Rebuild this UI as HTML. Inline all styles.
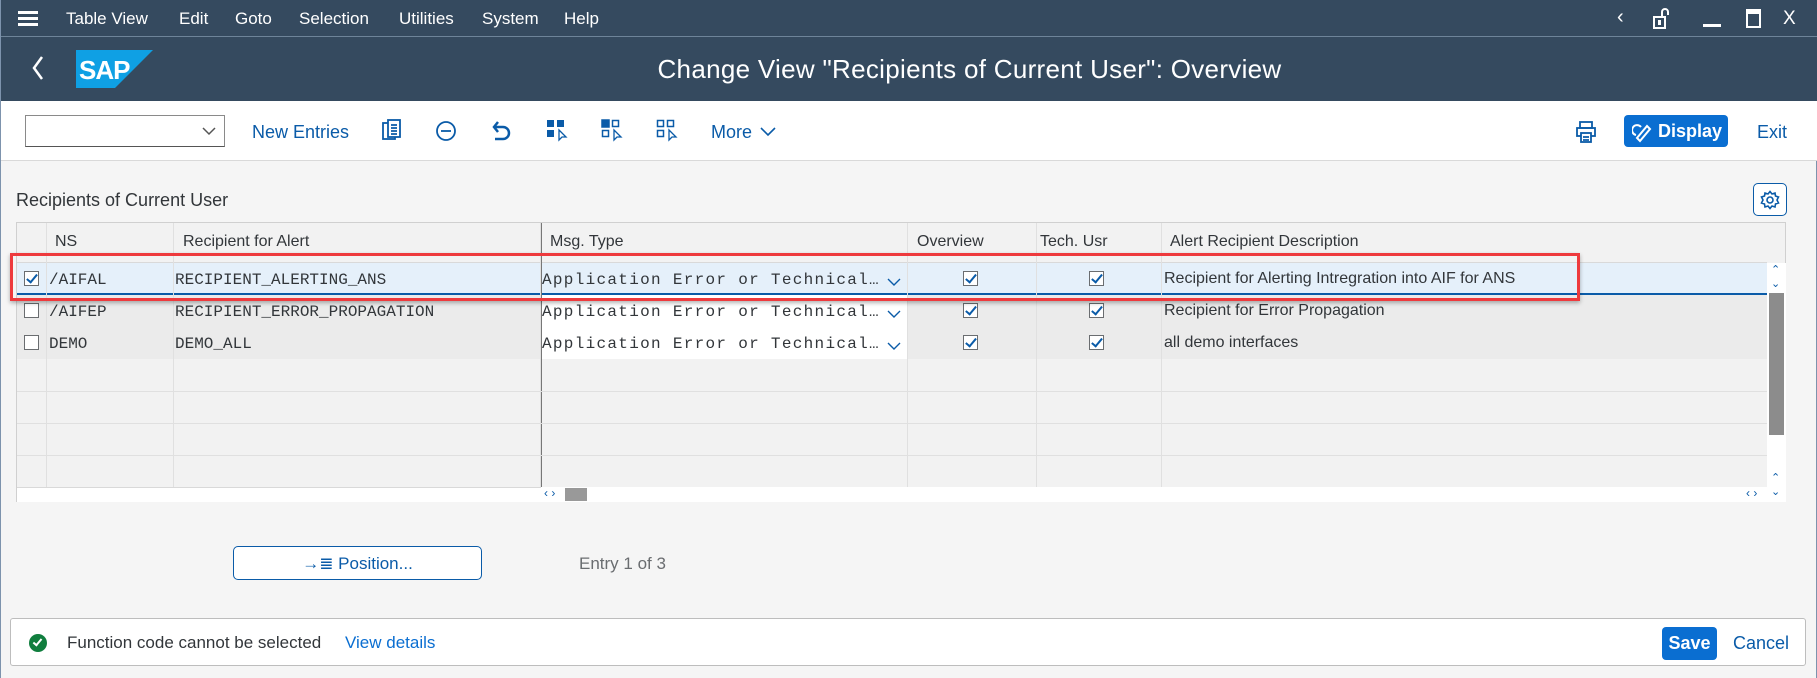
<!DOCTYPE html>
<html><head><meta charset="utf-8"><style>
*{box-sizing:border-box;margin:0;padding:0}
body{width:1817px;height:678px;overflow:hidden;background:#f5f5f5;font-family:"Liberation Sans",sans-serif;position:relative;border-left:1px solid #7d93ad;border-right:1px solid #7d93ad}
.a{position:absolute}
.menu{left:0;top:0;width:1817px;height:37px;background:#354a5f;border-bottom:1px solid #6e8499}
.menu span{position:absolute;top:9px;color:#fff;font-size:17px}
.title{left:0;top:37px;width:1817px;height:64px;background:#354a5f}
.tb{left:0;top:101px;width:1817px;height:60px;background:#fff;border-bottom:1px solid #d9d9d9}
.blue{color:#0a5ba8}
.mono{font-family:"Liberation Mono",monospace;font-size:16px;color:#32363a}
.cell{position:absolute;top:0;height:100%;border-right:1px solid #e0e0e0}
.cb{position:absolute;width:15px;height:15px;border:1px solid #6a6d70;background:#fff}
.cb.on::after{content:"";position:absolute;left:4px;top:0px;width:4px;height:9px;border:solid #0a5ba8;border-width:0 2px 2px 0;transform:rotate(40deg)}
</style></head><body>
<div class="a menu">
 <div class="a" style="left:17px;top:11px;width:20px;height:3px;background:#fff;box-shadow:0 6px 0 #fff,0 12px 0 #fff"></div>
 <span style="left:65px">Table View</span><span style="left:178px">Edit</span><span style="left:234px">Goto</span><span style="left:298px">Selection</span><span style="left:398px">Utilities</span><span style="left:481px">System</span><span style="left:563px">Help</span>
 <span style="left:1616px;top:6px;font-size:20px">‹</span>
 <svg class="a" style="left:1651px;top:8px" width="20" height="22"><rect x="2" y="9" width="11" height="11" fill="none" stroke="#fff" stroke-width="2"/><path d="M10 9V4a3 3 0 0 1 6 0v3" fill="none" stroke="#fff" stroke-width="2"/><rect x="6" y="12" width="3" height="5" fill="#fff"/></svg>
 <div class="a" style="left:1702px;top:24px;width:18px;height:3px;background:#fff"></div>
 <div class="a" style="left:1745px;top:9px;width:15px;height:19px;border:2px solid #fff;border-top-width:5px"></div>
 <span style="left:1782px;top:8px;font-size:19px">X</span>
</div>
<div class="a title">
 <svg class="a" style="left:30px;top:17px" width="14" height="28"><path d="M11 3L3 14l8 11" fill="none" stroke="#fff" stroke-width="2.5"/></svg>
 <svg class="a" style="left:75px;top:13px" width="77" height="38"><path d="M0 0H77L39 38H0Z" fill="#0fa0e4"/><text x="3" y="29" font-family="Liberation Sans" font-weight="bold" font-size="26" fill="#fff" letter-spacing="-1">SAP</text></svg>
 <div class="a" style="left:0;width:1937px;top:17px;text-align:center;color:#fff;font-size:26px;letter-spacing:0.3px">Change View "Recipients of Current User": Overview</div>
</div>
<div class="a tb">
 <div class="a" style="left:24px;top:14px;width:200px;height:32px;border:1px solid #8a8a8a;border-bottom-color:#555"></div>
 <svg class="a" style="left:201px;top:25px" width="14" height="10"><path d="M1 2l6 6 6-6" fill="none" stroke="#555" stroke-width="1.5"/></svg>
 <div class="a blue" style="left:251px;top:21px;font-size:18px">New Entries</div>
 <svg class="a" style="left:380px;top:18px" width="22" height="24" fill="none" stroke="#0a5ba8" stroke-width="1.8"><rect x="2" y="4" width="12" height="16"/><rect x="7" y="1" width="12" height="17" fill="#fff"/><path d="M10 6h6M10 9h6M10 12h6M10 15h6"/></svg>
 <svg class="a" style="left:434px;top:19px" width="22" height="22" fill="none" stroke="#0a5ba8" stroke-width="1.8"><circle cx="11" cy="11" r="9"/><path d="M6 11h10"/></svg>
 <svg class="a" style="left:490px;top:18px" width="22" height="24" fill="none" stroke="#0a5ba8" stroke-width="2.5"><path d="M7 3L3 8l4 5"/><path d="M3 8h9a6 6 0 0 1 0 12H4"/></svg>
 <svg class="a" style="left:545px;top:18px" width="24" height="24"><rect x="1" y="1" width="7" height="7" fill="#0a5ba8"/><rect x="11" y="1" width="7" height="7" fill="#0a5ba8"/><rect x="1" y="11" width="7" height="7" fill="#0a5ba8"/><path d="M13 11l7 7h-4l-3 3z" fill="none" stroke="#0a5ba8" stroke-width="1.3"/></svg>
 <svg class="a" style="left:600px;top:18px" width="24" height="24" fill="none" stroke="#0a5ba8" stroke-width="1.5"><rect x="1" y="1" width="7" height="7" fill="#0a5ba8"/><rect x="11.5" y="1.5" width="6" height="6"/><rect x="1.5" y="11.5" width="6" height="6"/><path d="M13 11l7 7h-4l-3 3z" stroke-width="1.3"/></svg>
 <svg class="a" style="left:655px;top:18px" width="24" height="24" fill="none" stroke="#0a5ba8" stroke-width="1.5"><rect x="1.5" y="1.5" width="6" height="6"/><rect x="11.5" y="1.5" width="6" height="6"/><rect x="1.5" y="11.5" width="6" height="6"/><path d="M13 11l7 7h-4l-3 3z" stroke-width="1.3"/></svg>
 <div class="a blue" style="left:710px;top:21px;font-size:18px">More</div>
 <svg class="a" style="left:759px;top:26px" width="16" height="10"><path d="M1 1l7 7 7-7" fill="none" stroke="#0a5ba8" stroke-width="1.6"/></svg>
 <svg class="a" style="left:1574px;top:19px" width="22" height="24" fill="none" stroke="#0a5ba8" stroke-width="1.8"><rect x="5" y="2" width="12" height="6"/><rect x="2" y="8" width="18" height="8"/><rect x="6" y="13" width="10" height="9" fill="#fff"/><path d="M8 17h6M8 20h6"/></svg>
 <div class="a" style="left:1623px;top:14px;width:104px;height:32px;background:#0a6ed1;border-radius:4px;color:#fff;font-weight:bold;font-size:18px;padding:6px 0 0 34px">Display</div>
 <svg class="a" style="left:1631px;top:20px" width="22" height="22" fill="none" stroke="#fff" stroke-width="2"><path d="M4 14a5 5 0 1 1 5-8M8 20l10-12-3-3L5 17z"/></svg>
 <div class="a blue" style="left:1756px;top:21px;font-size:18px">Exit</div>
</div>
<div class="a" style="left:15px;top:190px;font-size:18px;color:#32363a">Recipients of Current User</div>
<div class="a" style="left:1752px;top:183px;width:34px;height:33px;border:1px solid #0a5ba8;border-radius:5px;background:#fff"></div>
<svg class="a" style="left:1759px;top:190px" width="20" height="20" fill="none" stroke="#0a5ba8" stroke-width="1.6"><circle cx="10" cy="10" r="3"/><path d="M10 1.5l2 2.5 3-1 .5 3 3 1-1.5 3 1.5 3-3 1-.5 3-3-1-2 2.5-2-2.5-3 1-.5-3-3-1 1.5-3-1.5-3 3-1 .5-3 3 1z"/></svg>

<!-- table -->
<div class="a" style="left:15px;top:222px;width:1770px;height:280px;background:#f2f2f2;border:1px solid #d0d0d0">
 <div class="a" style="left:0;top:0;width:1750px;height:40px;background:#f2f2f2;border-bottom:1px solid #d9d9d9"></div>
 <div class="a" style="left:0;top:40px;width:1750px;height:96px;background:#ebebeb"></div>
 <div class="a" style="left:524px;top:72px;width:367px;height:64px;background:#fff"></div>
 <div class="a" style="left:0;top:40px;width:1750px;height:32px;background:#e5f0fa;border-bottom:2px solid #0a5ba8"></div>
 <div class="cell" style="left:0;width:30px"></div><div class="cell" style="left:30px;width:127px"></div><div class="cell" style="left:157px;width:367px"></div>
 <div class="cell" style="left:524px;width:367px;border-left:1px solid #777"></div><div class="cell" style="left:891px;width:129px"></div><div class="cell" style="left:1020px;width:125px"></div>
 <div class="a" style="left:0;top:168px;width:1750px;border-top:1px solid #e0e0e0"></div>
 <div class="a" style="left:0;top:200px;width:1750px;border-top:1px solid #e0e0e0"></div>
 <div class="a" style="left:0;top:232px;width:1750px;border-top:1px solid #e0e0e0"></div>
 <div class="a" style="left:0;top:264px;width:1750px;height:15px;background:#fff;border-top:1px solid #d9d9d9"></div>
 <div class="a" style="left:524px;top:264px;width:1226px;height:15px;background:#fff"></div>
 <div class="a" style="left:548px;top:265px;width:22px;height:13px;background:#999"></div>
 <div class="a blue" style="left:527px;top:263px;font-size:12px">‹ ›</div>
 <div class="a blue" style="left:1729px;top:263px;font-size:12px">‹ ›</div>
 <div class="a" style="left:1750px;top:40px;width:19px;height:239px;background:#fff"></div>
 <div class="a" style="left:1752px;top:70px;width:15px;height:142px;background:#8c8c8c"></div>
 <div class="a blue" style="left:1754px;top:40px;font-size:11px;line-height:14px">⌃<br>⌄</div>
 <div class="a blue" style="left:1754px;top:248px;font-size:11px;line-height:14px">⌃<br>⌄</div>
 <div class="a" style="left:38px;top:10px;font-size:16px;color:#32363a">NS</div>
 <div class="a" style="left:166px;top:10px;font-size:16px;color:#32363a">Recipient for Alert</div>
 <div class="a" style="left:533px;top:10px;font-size:16px;color:#32363a">Msg. Type</div>
 <div class="a" style="left:900px;top:10px;font-size:16px;color:#32363a">Overview</div>
 <div class="a" style="left:1023px;top:10px;font-size:16px;color:#32363a">Tech. Usr</div>
 <div class="a" style="left:1153px;top:10px;font-size:16px;color:#32363a">Alert Recipient Description</div>
 <div class="cb on" style="left:7px;top:48px"></div><div class="cb" style="left:7px;top:80px"></div><div class="cb" style="left:7px;top:112px"></div>
 <div class="a mono" style="left:32px;top:48px">/AIFAL</div><div class="a mono" style="left:32px;top:80px">/AIFEP</div><div class="a mono" style="left:32px;top:112px">DEMO</div>
 <div class="a mono" style="left:158px;top:48px">RECIPIENT_ALERTING_ANS</div><div class="a mono" style="left:158px;top:80px">RECIPIENT_ERROR_PROPAGATION</div><div class="a mono" style="left:158px;top:112px">DEMO_ALL</div>
 <div class="a mono" style="left:525px;top:48px;letter-spacing:1.3px">Application Error or Technical…</div>
 <div class="a mono" style="left:525px;top:80px;letter-spacing:1.3px">Application Error or Technical…</div>
 <div class="a mono" style="left:525px;top:112px;letter-spacing:1.3px">Application Error or Technical…</div>
 <svg class="a" style="left:870px;top:52px" width="14" height="80" fill="none" stroke="#0a5ba8" stroke-width="1.4"><path d="M1 4l6 6 6-6M1 36l6 6 6-6M1 68l6 6 6-6"/></svg>
 <div class="cb on" style="left:946px;top:48px"></div><div class="cb on" style="left:946px;top:80px"></div><div class="cb on" style="left:946px;top:112px"></div>
 <div class="cb on" style="left:1072px;top:48px"></div><div class="cb on" style="left:1072px;top:80px"></div><div class="cb on" style="left:1072px;top:112px"></div>
 <div class="a" style="left:1147px;top:47px;font-size:16px;color:#32363a">Recipient for Alerting Intregration into AIF for ANS</div>
 <div class="a" style="left:1147px;top:79px;font-size:16px;color:#32363a">Recipient for Error Propagation</div>
 <div class="a" style="left:1147px;top:111px;font-size:16px;color:#32363a">all demo interfaces</div>
</div>
<div class="a" style="left:9px;top:253px;width:1570px;height:48px;border:3px solid #ee3a3d;box-shadow:0 2px 4px rgba(0,0,0,.3)"></div>

<div class="a" style="left:232px;top:546px;width:249px;height:34px;border:1px solid #0a5ba8;border-radius:5px;background:#fff;text-align:center;padding-top:7px;font-size:17px" ><span class="blue">→≣ Position...</span></div>
<div class="a" style="left:578px;top:554px;font-size:17px;color:#6a6d70">Entry 1 of 3</div>

<div class="a" style="left:9px;top:618px;width:1796px;height:48px;background:#fff;border:1px solid #bdbdbd;border-radius:3px">
 <div class="a" style="left:18px;top:15px;width:18px;height:18px;border-radius:50%;background:#107e3e"></div>
 <div class="a" style="left:24px;top:18px;width:5px;height:9px;border:solid #fff;border-width:0 2px 2px 0;transform:rotate(40deg)"></div>
 <div class="a" style="left:56px;top:14px;font-size:17px;color:#32363a">Function code cannot be selected</div>
 <div class="a" style="left:334px;top:14px;font-size:17px;color:#0a6ed1">View details</div>
 <div class="a" style="left:1651px;top:8px;width:55px;height:33px;background:#0a6ed1;border-radius:4px;color:#fff;font-weight:bold;font-size:18px;text-align:center;padding-top:6px">Save</div>
 <div class="a blue" style="left:1722px;top:14px;font-size:18px">Cancel</div>
</div>
</body></html>
